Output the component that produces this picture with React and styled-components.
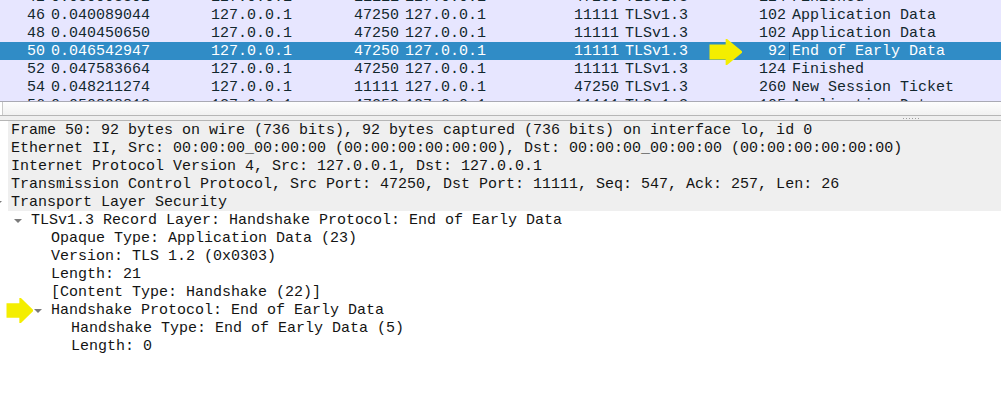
import React from 'react';
import styled, { createGlobalStyle } from 'styled-components';

const GlobalStyle = createGlobalStyle`
  html, body {
    margin: 0;
    padding: 0;
    background: #ffffff;
  }
  body {
    font-family: 'Liberation Mono', 'DejaVu Sans Mono', monospace;
  }
`;

const packets = [
  { no: 42, time: '0.039998892', src: '127.0.0.1', sport: '11111', dst: '127.0.0.1', dport: '47250', proto: 'TLSv1.3', len: 124, info: 'Finished' },
  { no: 46, time: '0.040089044', src: '127.0.0.1', sport: '47250', dst: '127.0.0.1', dport: '11111', proto: 'TLSv1.3', len: 102, info: 'Application Data' },
  { no: 48, time: '0.040450650', src: '127.0.0.1', sport: '47250', dst: '127.0.0.1', dport: '11111', proto: 'TLSv1.3', len: 102, info: 'Application Data' },
  { no: 50, time: '0.046542947', src: '127.0.0.1', sport: '47250', dst: '127.0.0.1', dport: '11111', proto: 'TLSv1.3', len: 92, info: 'End of Early Data', selected: true },
  { no: 52, time: '0.047583664', src: '127.0.0.1', sport: '47250', dst: '127.0.0.1', dport: '11111', proto: 'TLSv1.3', len: 124, info: 'Finished' },
  { no: 54, time: '0.048211274', src: '127.0.0.1', sport: '11111', dst: '127.0.0.1', dport: '47250', proto: 'TLSv1.3', len: 260, info: 'New Session Ticket' },
  { no: 56, time: '0.050898818', src: '127.0.0.1', sport: '47250', dst: '127.0.0.1', dport: '11111', proto: 'TLSv1.3', len: 105, info: 'Application Data' },
];

const tree = [
  { level: 0, text: 'Frame 50: 92 bytes on wire (736 bits), 92 bytes captured (736 bits) on interface lo, id 0' },
  { level: 0, text: 'Ethernet II, Src: 00:00:00_00:00:00 (00:00:00:00:00:00), Dst: 00:00:00_00:00:00 (00:00:00:00:00:00)' },
  { level: 0, text: 'Internet Protocol Version 4, Src: 127.0.0.1, Dst: 127.0.0.1' },
  { level: 0, text: 'Transmission Control Protocol, Src Port: 47250, Dst Port: 11111, Seq: 547, Ack: 257, Len: 26' },
  { level: 0, text: 'Transport Layer Security', open: true },
  { level: 1, text: 'TLSv1.3 Record Layer: Handshake Protocol: End of Early Data', open: true },
  { level: 2, text: 'Opaque Type: Application Data (23)' },
  { level: 2, text: 'Version: TLS 1.2 (0x0303)' },
  { level: 2, text: 'Length: 21' },
  { level: 2, text: '[Content Type: Handshake (22)]' },
  { level: 2, text: 'Handshake Protocol: End of Early Data', open: true },
  { level: 3, text: 'Handshake Type: End of Early Data (5)' },
  { level: 3, text: 'Length: 0' },
];

const Window = styled.div`
  width: 1001px;
  height: 420px;
  display: flex;
  flex-direction: column;
  overflow: hidden;
  font-size: 15px;
  line-height: 18px;
`;

const PacketList = styled.div`
  position: relative;
  height: 101px;
  flex: none;
  background: #e7e6ff;
  border-bottom: 1px solid #a9a9b4;
  overflow: hidden;
`;

const PacketRows = styled.div`
  margin-top: -12px;
`;

const PacketRow = styled.div`
  display: grid;
  grid-template-columns: 48px 160px 132px 62px 158px 62px 78px 89px 1fr;
  height: 18px;
  white-space: pre;
  color: ${(p) => (p.$selected ? '#ffffff' : '#12272e')};
  background: ${(p) => (p.$selected ? '#308cc6' : 'transparent')};
`;

const Cell = styled.span`
  padding: 1px 3px 0;
  text-align: ${(p) => p.$align || 'left'};
  overflow: hidden;
`;

const InfoCell = styled(Cell)`
  box-shadow: ${(p) => (p.$focus ? 'inset 1px 0 0 #1f6aa0' : 'none')};
`;

const Marker = styled.svg`
  position: absolute;
  left: ${(p) => p.$x}px;
  top: ${(p) => p.$y}px;
`;

const ScrollStrip = styled.div`
  height: 13px;
  flex: none;
  margin-left: 2px;
  border-left: 1px solid #c9c9c9;
  background: linear-gradient(#fdfdfd, #f1f1f1);
`;

const Splitter = styled.div`
  height: 4px;
  flex: none;
  display: flex;
  align-items: center;
  justify-content: flex-end;
  border-top: 1px solid #b6b6b6;
  border-bottom: 1px solid #b6b6b6;
  background: #efefef;
`;

const Grip = styled.span`
  width: 17px;
  height: 1px;
  margin-right: 81px;
  background: repeating-linear-gradient(to right, #9c9c9c 0 1px, transparent 1px 3px);
`;

const Details = styled.div`
  position: relative;
  flex: 1;
  background: #ffffff;
  overflow: hidden;
`;

const Tree = styled.div`
  margin-left: -12px;
`;

const TreeRow = styled.div`
  display: flex;
  height: 18px;
  padding-left: ${(p) => p.$level * 20}px;
  white-space: pre;
  color: #141414;
`;

const Expander = styled.span`
  width: 20px;
  flex: none;
  display: flex;
  align-items: center;
  justify-content: center;
  &::before {
    content: '';
    display: ${(p) => (p.$open ? 'block' : 'none')};
    margin-top: 2px;
    border-left: 4px solid transparent;
    border-right: 4px solid transparent;
    border-top: 4px solid #7b7b7b;
  }
`;

const Label = styled.span`
  flex: 1;
  padding: 1px 0 0 3px;
  overflow: hidden;
  background: ${(p) => (p.$shaded ? '#efefef' : 'transparent')};
`;

function YellowArrow({ x, y, w, h }) {
  const shaftTop = h * 0.27;
  const shaftBottom = h * 0.73;
  const neck = w * 0.55;
  return (
    <Marker $x={x} $y={y} width={w} height={h} viewBox={`0 0 ${w} ${h}`}>
      <path
        d={`M2 ${shaftTop} H${neck} V2 L${w - 1.5} ${h / 2} L${neck} ${h - 2} V${shaftBottom} H2 Z`}
        fill="#f4ee00"
        stroke="#f4ee00"
        strokeWidth="3"
        strokeLinejoin="miter"
      />
    </Marker>
  );
}

export default function App() {
  return (
    <>
      <GlobalStyle />
      <Window>
        <PacketList>
          <PacketRows>
            {packets.map((p) => (
              <PacketRow key={p.no} $selected={p.selected}>
                <Cell $align="right">{p.no}</Cell>
                <Cell>{p.time}</Cell>
                <Cell>{p.src}</Cell>
                <Cell $align="right">{p.sport}</Cell>
                <Cell>{p.dst}</Cell>
                <Cell $align="right">{p.dport}</Cell>
                <Cell>{p.proto}</Cell>
                <Cell $align="right">{p.len}</Cell>
                <InfoCell $focus={p.selected}>{p.info}</InfoCell>
              </PacketRow>
            ))}
          </PacketRows>
          <YellowArrow x={709} y={39} w={33} h={26} />
        </PacketList>
        <ScrollStrip />
        <Splitter>
          <Grip />
        </Splitter>
        <Details>
          <Tree>
            {tree.map((n, i) => (
              <TreeRow key={i} $level={n.level}>
                <Expander $open={n.open} />
                <Label $shaded={n.level === 0}>{n.text}</Label>
              </TreeRow>
            ))}
          </Tree>
          <YellowArrow x={6} y={177} w={27} h={25} />
        </Details>
      </Window>
    </>
  );
}
